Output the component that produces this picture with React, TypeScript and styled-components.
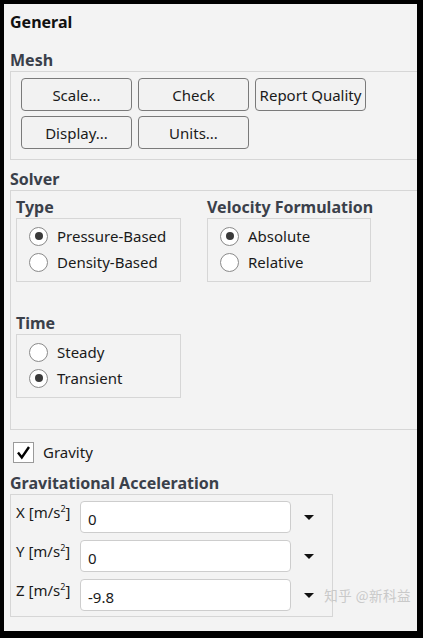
import React from 'react';
import styled, { createGlobalStyle } from 'styled-components';

const GlobalStyle = createGlobalStyle`
  html, body {
    margin: 0;
    padding: 0;
    background: #000;
  }
  body {
    font-family: "Noto Sans", "Open Sans", sans-serif;
  }
`;

const Frame = styled.div`
  position: relative;
  box-sizing: border-box;
  width: 423px;
  height: 638px;
  border-style: solid;
  border-color: #000;
  border-width: 4px 6px 7px 4px;
  background: #f3f3f3;
  padding: 9px 0 0 6px;
  color: #1a1a1a;
  overflow: hidden;
`;

const PanelTitle = styled.div`
  font-weight: 700;
  font-size: 16px;
  line-height: 18px;
  color: #111;
  height: 18px;
`;

const GroupTitle = styled.div<{ $mt?: number }>`
  font-weight: 700;
  font-size: 16px;
  line-height: 18px;
  height: 18px;
  color: #3a404a;
  margin-top: ${p => p.$mt ?? 0}px;
  white-space: nowrap;
`;

const Group = styled.div<{ $open?: boolean; $w?: number; $pad: string }>`
  box-sizing: border-box;
  border: 1px solid #d6d6d6;
  ${p => (p.$open ? 'border-right: none;' : '')}
  width: ${p => (p.$w ? `${p.$w}px` : 'auto')};
  padding: ${p => p.$pad};
  margin-top: 2px;
`;

const ButtonGrid = styled.div`
  display: grid;
  grid-template-columns: repeat(3, 111px);
  grid-auto-rows: 33px;
  column-gap: 6px;
  row-gap: 5px;
`;

const Button = styled.button`
  box-sizing: border-box;
  font-family: inherit;
  font-size: 15px;
  color: #1a1a1a;
  background: #f2f2f2;
  border: 1px solid #7a7a7a;
  border-radius: 4px;
  padding: 0;
  white-space: nowrap;
`;

const Row = styled.div`
  display: flex;
  gap: 26px;
`;

const SubGroup = styled.div<{ $w: number }>`
  box-sizing: border-box;
  width: ${p => p.$w}px;
  height: 64px;
  border: 1px solid #d6d6d6;
  margin-top: 2px;
  padding: 7px 0 0 12px;
  display: flex;
  flex-direction: column;
  gap: 6px;
`;

const RadioRow = styled.label`
  display: flex;
  align-items: center;
  gap: 9px;
  height: 20px;
  font-size: 15px;
  color: #1a1a1a;
  white-space: nowrap;
`;

const RadioCircle = styled.span<{ $on?: boolean }>`
  box-sizing: border-box;
  width: 19px;
  height: 19px;
  border-radius: 50%;
  border: 1px solid #8a8a8a;
  background: #fff;
  display: flex;
  align-items: center;
  justify-content: center;
  &::after {
    content: '';
    width: 8px;
    height: 8px;
    border-radius: 50%;
    background: ${p => (p.$on ? '#3a3a3a' : 'transparent')};
  }
`;

const CheckRow = styled.div`
  display: flex;
  align-items: center;
  gap: 9px;
  margin: 11px 0 0 3px;
  height: 22px;
  font-size: 15px;
`;

const CheckBox = styled.span`
  box-sizing: border-box;
  width: 21px;
  height: 21px;
  border: 1px solid #9a9a9a;
  background: #fff;
  display: flex;
  align-items: center;
  justify-content: center;
`;

const FieldRow = styled.div`
  display: flex;
  align-items: center;
  height: 32px;
`;

const FieldLabel = styled.div`
  width: 64px;
  font-size: 15px;
  color: #1a1a1a;
  white-space: nowrap;
  align-self: flex-start;
  margin-top: 1px;
  sup {
    font-size: 9px;
    vertical-align: 6px;
    line-height: 0;
  }
`;

const Input = styled.div`
  box-sizing: border-box;
  width: 211px;
  height: 32px;
  background: #fff;
  border: 1px solid #cdcdcd;
  border-radius: 4px;
  padding: 7px 0 0 7px;
  font-size: 15px;
`;

const Arrow = styled.span`
  margin-left: 13px;
  width: 0;
  height: 0;
  border-left: 5px solid transparent;
  border-right: 5px solid transparent;
  border-top: 5px solid #111;
`;

const Fields = styled.div`
  display: flex;
  flex-direction: column;
  gap: 7px;
`;

const Watermark = styled.div`
  position: absolute;
  right: 6px;
  bottom: 26px;
  font-family: "Noto Sans CJK SC", sans-serif;
  font-size: 13.5px;
  color: #c9c9c9;
  letter-spacing: 0.5px;
`;

const Radio: React.FC<{ on?: boolean; label: string }> = ({ on, label }) => (
  <RadioRow>
    <RadioCircle $on={on} />
    {label}
  </RadioRow>
);

const accel = [
  { axis: 'X', value: '0' },
  { axis: 'Y', value: '0' },
  { axis: 'Z', value: '-9.8' },
];

export default function App() {
  return (
    <>
      <GlobalStyle />
      <Frame>
        <PanelTitle>General</PanelTitle>

        <GroupTitle $mt={20}>Mesh</GroupTitle>
        <Group $open $pad="6px 0 10px 10px">
          <ButtonGrid>
            <Button>Scale...</Button>
            <Button>Check</Button>
            <Button>Report Quality</Button>
            <Button>Display...</Button>
            <Button>Units...</Button>
          </ButtonGrid>
        </Group>

        <GroupTitle $mt={10}>Solver</GroupTitle>
        <Group $open $pad="7px 0 31px 5px">
          <Row>
            <div>
              <GroupTitle>Type</GroupTitle>
              <SubGroup $w={165}>
                <Radio on label="Pressure-Based" />
                <Radio label="Density-Based" />
              </SubGroup>
            </div>
            <div>
              <GroupTitle>Velocity Formulation</GroupTitle>
              <SubGroup $w={164}>
                <Radio on label="Absolute" />
                <Radio label="Relative" />
              </SubGroup>
            </div>
          </Row>
          <GroupTitle $mt={32}>Time</GroupTitle>
          <SubGroup $w={165}>
            <Radio label="Steady" />
            <Radio on label="Transient" />
          </SubGroup>
        </Group>

        <CheckRow>
          <CheckBox>
            <svg width="15" height="15" viewBox="0 0 15 15">
              <path d="M2 7.5 L5.8 12.5 L13 2" fill="none" stroke="#000" strokeWidth="2.4" />
            </svg>
          </CheckBox>
          Gravity
        </CheckRow>

        <GroupTitle $mt={11}>Gravitational Acceleration</GroupTitle>
        <Group $w={323} $pad="6px 0 5px 5px">
          <Fields>
            {accel.map(a => (
              <FieldRow key={a.axis}>
                <FieldLabel>
                  {a.axis} [m/s<sup>2</sup>]
                </FieldLabel>
                <Input>{a.value}</Input>
                <Arrow />
              </FieldRow>
            ))}
          </Fields>
        </Group>

        <Watermark>知乎 @新科益</Watermark>
      </Frame>
    </>
  );
}
